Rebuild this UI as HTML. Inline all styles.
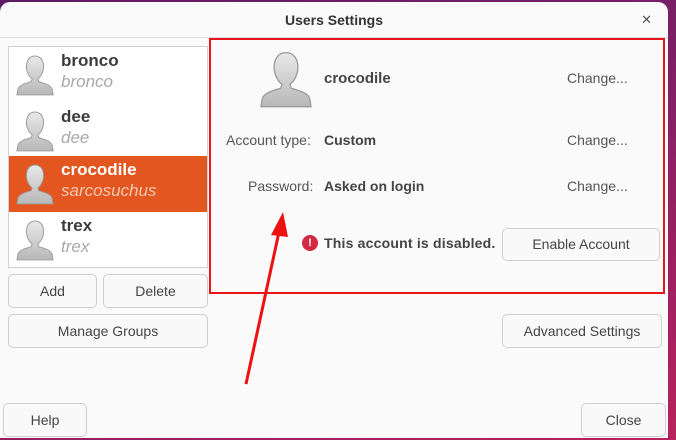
<!DOCTYPE html>
<html><head><style>
*{margin:0;padding:0;box-sizing:border-box}
body{width:676px;height:440px;overflow:hidden;background:linear-gradient(160deg,#5e1a63 0%,#7a1f66 40%,#b8225c 100%);font-family:"Liberation Sans","DejaVu Sans",sans-serif;position:relative}
.win{position:absolute;left:0;top:2px;width:668px;height:436px;background:#fafafa;border-radius:10px 10px 0 0}
.title{position:absolute;left:0;top:0;width:668px;height:36px;border-bottom:1px solid #dcdcdc;text-align:center;line-height:36px;font-weight:bold;font-size:14px;color:#333}
.x{position:absolute;right:16px;top:0;font-size:13px;color:#555;font-weight:normal}
.abs{position:absolute}
.btn{position:absolute;border:1px solid #cfcfcf;border-radius:5px;background:#f9f9f9;color:#444;font-size:14px;text-align:center}
.list{position:absolute;left:8px;top:46px;width:200px;height:222px;border:1px solid #d0d0d0;background:#fff}
.row{position:absolute;left:0;width:198px;height:56px}
.row .n{position:absolute;left:52px;top:4px;font-size:17px;font-weight:bold;color:#3c3c3c}
.row .s{position:absolute;left:52px;top:25px;font-size:17px;font-style:italic;color:#a8a8a8}
.row svg{position:absolute;left:7px;top:7px}
.sel{background:#e3561f}
.sel .n,.sel .s{color:#fff}
.sel .s{color:#f5c9b5}
.lbl{position:absolute;font-size:14px;color:#555}
.b{font-weight:bold;color:#444}
</style></head><body>
<svg width="0" height="0" style="position:absolute"><defs>
<linearGradient id="g" x1="0" y1="0" x2="0" y2="1"><stop offset="0" stop-color="#e8e8e8"/><stop offset="1" stop-color="#b8b8b8"/></linearGradient>
<symbol id="av" viewBox="0 0 40 44"><path d="M20 2c-6 0-9 5-9 11 0 6 3 11 6 13l-1 3c-7 2-13 4-14 8l-1 6h38l-1-6c-1-4-7-6-14-8l-1-3c3-2 6-7 6-13 0-6-3-11-9-11z" fill="url(#g)" stroke="#9a9a9a" stroke-width="1"/></symbol>
</defs></svg>
<div class="win">
<div class="title">Users Settings<span class="x">✕</span></div>
</div>
<div class="list">
<div class="row" style="top:0"><svg width="38" height="42"><use href="#av"/></svg><div class="n">bronco</div><div class="s">bronco</div></div>
<div class="row" style="top:56px"><svg width="38" height="42"><use href="#av"/></svg><div class="n">dee</div><div class="s">dee</div></div>
<div class="row sel" style="top:109px"><svg width="38" height="42"><use href="#av"/></svg><div class="n">crocodile</div><div class="s">sarcosuchus</div></div>
<div class="row" style="top:165px"><svg width="38" height="42"><use href="#av"/></svg><div class="n">trex</div><div class="s">trex</div></div>
</div>
<div class="btn" style="left:8px;top:274px;width:89px;height:34px;line-height:32px">Add</div>
<div class="btn" style="left:103px;top:274px;width:105px;height:34px;line-height:32px">Delete</div>
<div class="btn" style="left:8px;top:314px;width:200px;height:34px;line-height:32px">Manage Groups</div>

<div class="abs" style="left:209px;top:38px;width:456px;height:256px;border:2.5px solid #e8141c"></div>
<svg class="abs" style="left:259px;top:50px" width="54" height="58"><use href="#av"/></svg>
<div class="lbl b" style="left:324px;top:70px;font-size:15px">crocodile</div>
<div class="lbl" style="left:567px;top:70px">Change...</div>
<div class="lbl" style="left:226px;top:132px">Account type:</div>
<div class="lbl b" style="left:324px;top:132px">Custom</div>
<div class="lbl" style="left:567px;top:132px">Change...</div>
<div class="lbl" style="left:248px;top:178px">Password:</div>
<div class="lbl b" style="left:324px;top:178px">Asked on login</div>
<div class="lbl" style="left:567px;top:178px">Change...</div>
<div class="abs" style="left:302px;top:235px;width:16px;height:16px;border-radius:50%;background:#d22a45;color:#fff;font-size:11px;font-weight:bold;text-align:center;line-height:16px">!</div>
<div class="lbl b" style="left:324px;top:235px;letter-spacing:0.2px">This account is disabled.</div>
<div class="btn" style="left:502px;top:228px;width:158px;height:33px;line-height:31px">Enable Account</div>
<div class="btn" style="left:502px;top:314px;width:160px;height:34px;line-height:32px">Advanced Settings</div>
<div class="btn" style="left:3px;top:403px;width:84px;height:34px;line-height:32px">Help</div>
<div class="btn" style="left:581px;top:403px;width:85px;height:34px;line-height:32px">Close</div>
<svg class="abs" style="left:0;top:0" width="676" height="440">
<line x1="246" y1="384" x2="279" y2="232" stroke="#ee1111" stroke-width="3"/>
<polygon points="283,212 271,235 288,237" fill="#ee1111"/>
</svg>
</body></html>
